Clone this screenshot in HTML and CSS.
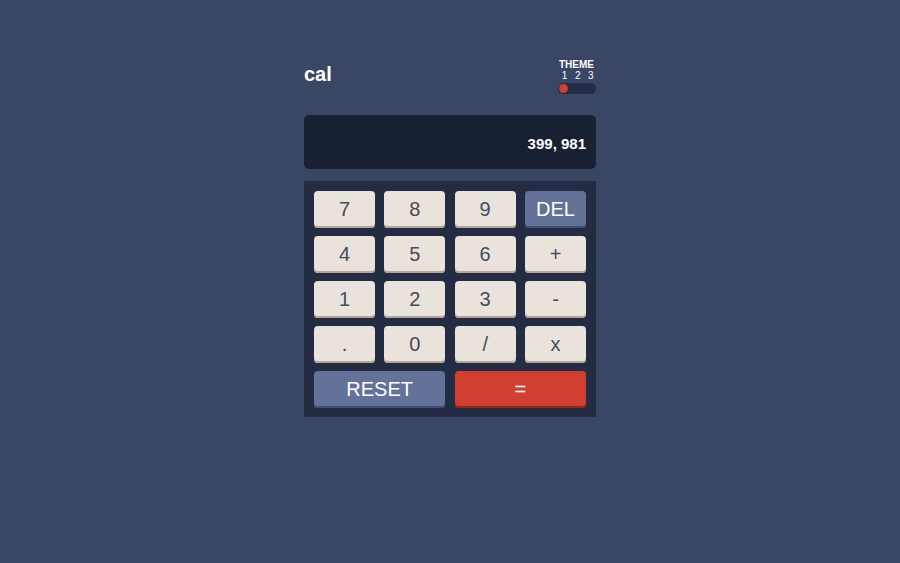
FILE: index.html
```html
<!DOCTYPE html>
<html lang="en">
<head>
<meta charset="utf-8">
<title>cal</title>
<link rel="stylesheet" href="styles.css">
</head>
<body>
<main class="calc">
  <header class="header">
    <h1 class="logo">cal</h1>
    <div class="theme">
      <div class="theme-label">THEME</div>
      <div class="theme-nums"><span>1</span><span>2</span><span>3</span></div>
      <div class="toggle"><span class="toggle-dot"></span></div>
    </div>
  </header>
  <section class="display"><span class="display-value">399, 981</span></section>
  <section class="keypad">
    <button class="key">7</button>
    <button class="key">8</button>
    <button class="key">9</button>
    <button class="key key-blue">DEL</button>
    <button class="key">4</button>
    <button class="key">5</button>
    <button class="key">6</button>
    <button class="key">+</button>
    <button class="key">1</button>
    <button class="key">2</button>
    <button class="key">3</button>
    <button class="key">-</button>
    <button class="key">.</button>
    <button class="key">0</button>
    <button class="key">/</button>
    <button class="key">x</button>
    <button class="key key-blue key-wide">RESET</button>
    <button class="key key-red key-wide">=</button>
  </section>
</main>
</body>
</html>
```

FILE: styles.css
```css
* { box-sizing: border-box; }

html, body {
  margin: 0;
  padding: 0;
}

body {
  background: #3a4764;
  font-family: "Liberation Sans", Arial, sans-serif;
  color: #ffffff;
  min-height: 563px;
}

.calc {
  width: 292px;
  margin: 0 auto;
  padding-top: 57px;
}

.header {
  display: flex;
  justify-content: space-between;
  align-items: center;
}

.logo {
  margin: 0;
  font-size: 20px;
  font-weight: 700;
  line-height: 23px;
  padding-bottom: 2px;
}

.theme {
  display: flex;
  flex-direction: column;
  align-items: flex-end;
  width: 38px;
}

.theme-label {
  font-size: 10px;
  font-weight: 700;
  line-height: 12px;
  margin-top: 1.5px;
  margin-right: 2px;
}

.theme-nums {
  display: flex;
  gap: 7.5px;
  font-size: 10px;
  line-height: 12px;
  margin-top: -0.5px;
  margin-right: 2.5px;
}

.toggle {
  margin-top: 1px;
  width: 38px;
  height: 11px;
  border-radius: 6px;
  background: #232c44;
  display: flex;
  align-items: center;
  padding-left: 0.5px;
}

.toggle-dot {
  width: 9px;
  height: 9px;
  border-radius: 50%;
  background: #d03f2f;
}

.display {
  margin-top: 21px;
  height: 54px;
  background: #182034;
  border-radius: 5px;
  display: flex;
  justify-content: flex-end;
  align-items: flex-end;
  padding: 0 10px 17px;
}

.display-value {
  font-size: 15px;
  font-weight: 700;
  line-height: 17px;
}

.keypad {
  margin-top: 12px;
  background: #232c43;
  padding: 10px 10px 9px;
  display: grid;
  grid-template-columns: repeat(4, 1fr);
  column-gap: 9.33px;
  row-gap: 8px;
}

.key {
  height: 37px;
  border: 0;
  border-radius: 4px;
  background: #eae3dc;
  box-shadow: inset 0 -2px 0 #b4a597;
  color: #444b5a;
  font-family: "Liberation Sans", Arial, sans-serif;
  font-size: 20px;
  line-height: 1;
  padding: 0 0 1px;
  margin: 0;
  display: flex;
  align-items: center;
  justify-content: center;
}

.key-blue {
  background: #647198;
  box-shadow: inset 0 -2px 0 #414e73;
  color: #ffffff;
}

.key-red {
  background: #d03f2f;
  box-shadow: inset 0 -2px 0 #93261a;
  color: #ffffff;
}

.key-wide {
  grid-column: span 2;
}
```
